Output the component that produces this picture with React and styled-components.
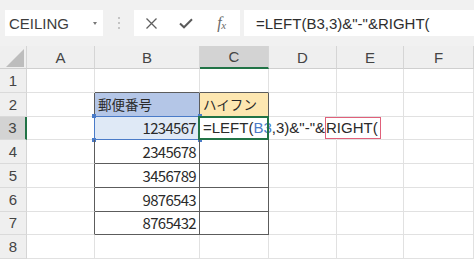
import React from "react";
import styled, { createGlobalStyle } from "styled-components";

const GlobalStyle = createGlobalStyle`
  html, body {
    margin: 0;
    padding: 0;
    background: #ffffff;
  }
  body {
    width: 474px;
    height: 259px;
    overflow: hidden;
    font-family: "Noto Sans CJK JP", "Noto Sans", sans-serif;
  }
`;

const Window = styled.div`
  display: flex;
  flex-direction: column;
  width: 474px;
  height: 259px;
`;

/* ---------- formula bar ---------- */

const Toolbar = styled.div`
  display: flex;
  align-items: center;
  height: 46px;
  padding-left: 5px;
  background: #f1f1f1;
  box-sizing: border-box;
`;

const NameBox = styled.div`
  display: flex;
  align-items: center;
  justify-content: space-between;
  width: 98px;
  height: 26px;
  padding: 0 6px 0 4px;
  box-sizing: border-box;
  background: #fff;
  font-family: "Liberation Sans", Arial, sans-serif;
  font-size: 15px;
  color: #3c3c3c;
`;

const Caret = styled.span`
  width: 0;
  height: 0;
  border-left: 2.5px solid transparent;
  border-right: 2.5px solid transparent;
  border-top: 3px solid #777;
  margin-top: 1px;
`;

const Grip = styled.div`
  display: flex;
  flex-direction: column;
  align-items: center;
  justify-content: center;
  gap: 3px;
  width: 31px;
  height: 26px;

  span {
    width: 2px;
    height: 2px;
    border-radius: 1px;
    background: #b5b5b5;
  }
`;

const IconBox = styled.div`
  display: flex;
  align-items: center;
  width: 106px;
  height: 26px;
  background: #fff;
`;

const IconSlot = styled.div`
  display: flex;
  align-items: center;
  justify-content: center;
  width: ${(p) => p.$w}px;
  height: 26px;
  color: #606060;
`;

const Fx = styled.span`
  font-family: "Liberation Serif", "Times New Roman", serif;
  font-style: italic;
  font-size: 16px;
  color: #6a6a6a;
  letter-spacing: -0.5px;

  sub {
    font-size: 11px;
    vertical-align: -1px;
  }
`;

const FormulaInput = styled.div`
  flex: 1;
  display: flex;
  align-items: center;
  height: 26px;
  margin-left: 4px;
  padding-left: 12px;
  background: #fff;
  font-family: "Liberation Sans", Arial, sans-serif;
  font-size: 15px;
  color: #2e2e2e;
  white-space: nowrap;
`;

/* ---------- sheet ---------- */

const Sheet = styled.div`
  display: grid;
  grid-template-columns: 27px 68px 105px 69px 68px 67px 70px;
  grid-template-rows: 23px repeat(8, 23.75px);
  flex: 1;
  overflow: hidden;
`;

const Corner = styled.div`
  display: flex;
  align-items: flex-end;
  justify-content: flex-end;
  padding: 0 2px 1px 0;
  background: #efefef;
  border-right: 1px solid #d5d5d5;
  border-bottom: 1px solid #cfcfcf;
  box-sizing: border-box;
`;

const ColHead = styled.div`
  display: flex;
  align-items: center;
  justify-content: center;
  box-sizing: border-box;
  background: ${(p) => (p.$active ? "#d3d3d3" : "#efefef")};
  border-right: 1px solid #d5d5d5;
  border-bottom: ${(p) => (p.$active ? "2px solid #217346" : "1px solid #cfcfcf")};
  font-family: "Liberation Sans", Arial, sans-serif;
  font-size: 15px;
  color: #444;
`;

const RowHead = styled.div`
  display: flex;
  align-items: center;
  justify-content: center;
  box-sizing: border-box;
  background: ${(p) => (p.$active ? "#d3d3d3" : "#efefef")};
  border-right: ${(p) => (p.$active ? "2px solid #217346" : "1px solid #d5d5d5")};
  border-bottom: 1px solid #dadada;
  font-family: "Liberation Sans", Arial, sans-serif;
  font-size: 15px;
  color: #444;
`;

const Cell = styled.div`
  position: relative;
  display: flex;
  align-items: center;
  justify-content: ${(p) => (p.$right ? "flex-end" : "flex-start")};
  padding: 0 3px;
  box-sizing: border-box;
  background: ${(p) => p.$fill || "transparent"};
  border-right: 1px solid
    ${(p) => (p.$hideRight ? "transparent" : p.$darkRight ? "#5c5c5c" : "#e1e1e1")};
  border-bottom: 1px solid ${(p) => (p.$darkBottom ? "#5c5c5c" : "#e1e1e1")};
  font-size: ${(p) => (p.$num ? "15px" : "13.5px")};
  letter-spacing: ${(p) => (p.$num ? "-0.7px" : "0")};
  color: #2a2a2a;
  white-space: nowrap;
  overflow: visible;
  z-index: ${(p) => (p.$top ? 2 : 1)};
`;

const ActiveFrame = styled.div`
  position: absolute;
  inset: -1px -1px -1px -2px;
  border: 2px solid #217346;
  pointer-events: none;
`;

const RangeFrame = styled.div`
  position: absolute;
  inset: -1px -1px -1px -1px;
  border: 1.5px solid #4a7bc8;
  pointer-events: none;
`;

const Handle = styled.span`
  position: absolute;
  width: 4px;
  height: 4px;
  background: #4a7bc8;
  ${(p) => (p.$t ? "top: -3px;" : "bottom: -3px;")}
  ${(p) => (p.$l ? "left: -3px;" : "right: -3px;")}
`;

const EditText = styled.span`
  position: relative;
  display: flex;
  align-items: center;
  height: 100%;
  font-family: "Liberation Sans", Arial, sans-serif;
  font-size: 15px;
  color: #2a2a2a;
`;

const Ref = styled.span`
  color: #4a7bc8;
`;

const Pending = styled.span`
  display: inline-flex;
  align-items: center;
  height: 100%;
  padding-right: 2px;
  border: 1px solid #e0607a;
  box-sizing: border-box;
`;

const colLetters = ["A", "B", "C", "D", "E", "F"];

const numbers = {
  3: "1234567",
  4: "2345678",
  5: "3456789",
  6: "9876543",
  7: "8765432",
};

function renderCell(row, col) {
  const key = `${col}${row}`;
  const inTable = (col === "B" || col === "C") && row >= 2 && row <= 7;
  const props = {
    $darkRight: inTable || (col === "A" && row >= 2 && row <= 7),
    $darkBottom: inTable || ((col === "B" || col === "C") && row === 1),
  };

  if (key === "B2") {
    return (
      <Cell key={key} {...props} $fill="#b4c6e7">
        郵便番号
      </Cell>
    );
  }
  if (key === "C2") {
    return (
      <Cell key={key} {...props} $fill="#fde7b1">
        ハイフン
      </Cell>
    );
  }
  if (key === "B3") {
    return (
      <Cell key={key} {...props} $fill="#dfe9f6" $right $num>
        {numbers[3]}
        <RangeFrame>
          <Handle $t $l />
          <Handle $t />
          <Handle $l />
          <Handle />
        </RangeFrame>
      </Cell>
    );
  }
  if (key === "C3") {
    return (
      <Cell key={key} {...props} $top>
        <EditText>
          =LEFT(<Ref>B3</Ref>,3)&amp;"-"&amp;<Pending>RIGHT(</Pending>
        </EditText>
        <ActiveFrame />
      </Cell>
    );
  }
  if (col === "B" && numbers[row]) {
    return (
      <Cell key={key} {...props} $right $num>
        {numbers[row]}
      </Cell>
    );
  }
  const overflowed = row === 3 && col === "D";
  return <Cell key={key} {...props} $hideRight={overflowed} />;
}

export default function App() {
  const rows = [1, 2, 3, 4, 5, 6, 7, 8];
  return (
    <>
      <GlobalStyle />
      <Window>
        <Toolbar>
          <NameBox>
            CEILING
            <Caret />
          </NameBox>
          <Grip>
            <span />
            <span />
            <span />
          </Grip>
          <IconBox>
            <IconSlot $w={35}>
              <svg width="13" height="13" viewBox="0 0 13 13">
                <path d="M1.5 1.5 L11.5 11.5 M11.5 1.5 L1.5 11.5" stroke="#5f5f5f" strokeWidth="1.3" fill="none" />
              </svg>
            </IconSlot>
            <IconSlot $w={36}>
              <svg width="14" height="11" viewBox="0 0 14 11">
                <path d="M1 5.5 L5 9.3 L13 1.2" stroke="#5a5a5a" strokeWidth="2" fill="none" />
              </svg>
            </IconSlot>
            <IconSlot $w={38}>
              <Fx>
                f<sub>x</sub>
              </Fx>
            </IconSlot>
          </IconBox>
          <FormulaInput>=LEFT(B3,3)&amp;"-"&amp;RIGHT(</FormulaInput>
        </Toolbar>

        <Sheet>
          <Corner>
            <svg width="18" height="18" viewBox="0 0 18 18">
              <path d="M18 0 L18 18 L0 18 Z" fill="#bdbdbd" />
            </svg>
          </Corner>
          {colLetters.map((c) => (
            <ColHead key={c} $active={c === "C"}>
              {c}
            </ColHead>
          ))}
          {rows.map((r) => (
            <React.Fragment key={r}>
              <RowHead $active={r === 3}>{r}</RowHead>
              {colLetters.map((c) => renderCell(r, c))}
            </React.Fragment>
          ))}
        </Sheet>
      </Window>
    </>
  );
}
